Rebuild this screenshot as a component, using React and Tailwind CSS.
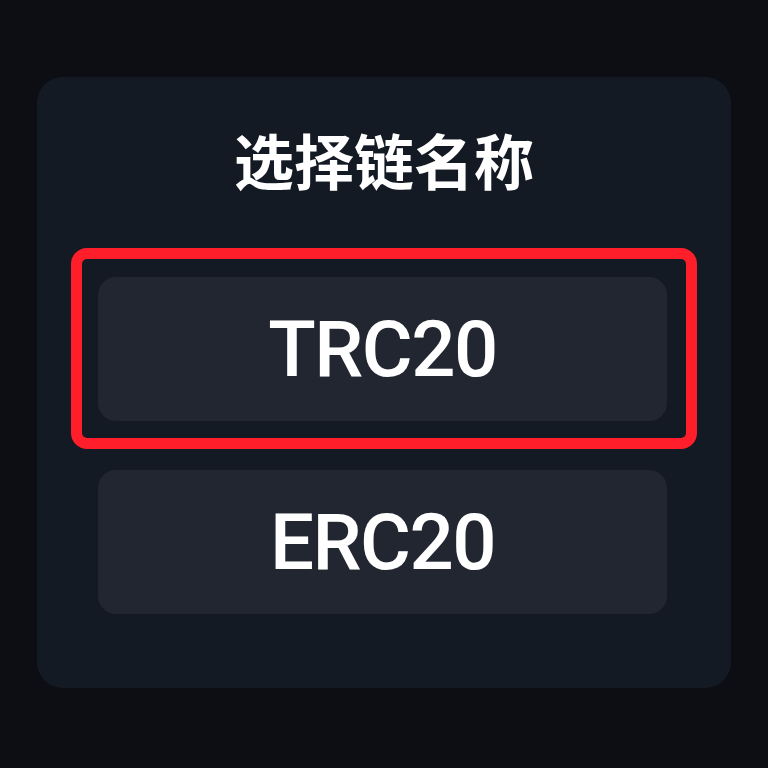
export default function App() {
  return (
    <div className="w-[768px] h-[768px] bg-[#0c0e14] flex justify-center pt-[77px]">
      <div className="w-[694px] h-[611px] rounded-[26px] bg-[#141a24] px-[34px] pt-[52px] flex flex-col">
        <div
          className="text-white text-center text-[60px] leading-[60px] font-bold"
          style={{ fontFamily: '"Noto Sans CJK SC", "Noto Sans", sans-serif' }}
        >
          选择链名称
        </div>
        <div className="mt-[59px] border-[11px] border-[#ff1e2a] rounded-[16px] pt-[18px] pb-[17px] pl-[16px] pr-[19px]">
          <div
            className="h-[144px] rounded-[18px] bg-[#212631] flex items-center justify-center text-white text-[78px] font-medium tracking-[-1.5px]"
            style={{ fontFamily: 'Roboto, "Liberation Sans", sans-serif' }}
          >
            TRC20
          </div>
        </div>
        <div
          className="mt-[21px] ml-[27px] mr-[30px] h-[144px] rounded-[18px] bg-[#212631] flex items-center justify-center text-white text-[78px] font-medium tracking-[-1.5px]"
          style={{ fontFamily: 'Roboto, "Liberation Sans", sans-serif' }}
        >
          ERC20
        </div>
      </div>
    </div>
  );
}
